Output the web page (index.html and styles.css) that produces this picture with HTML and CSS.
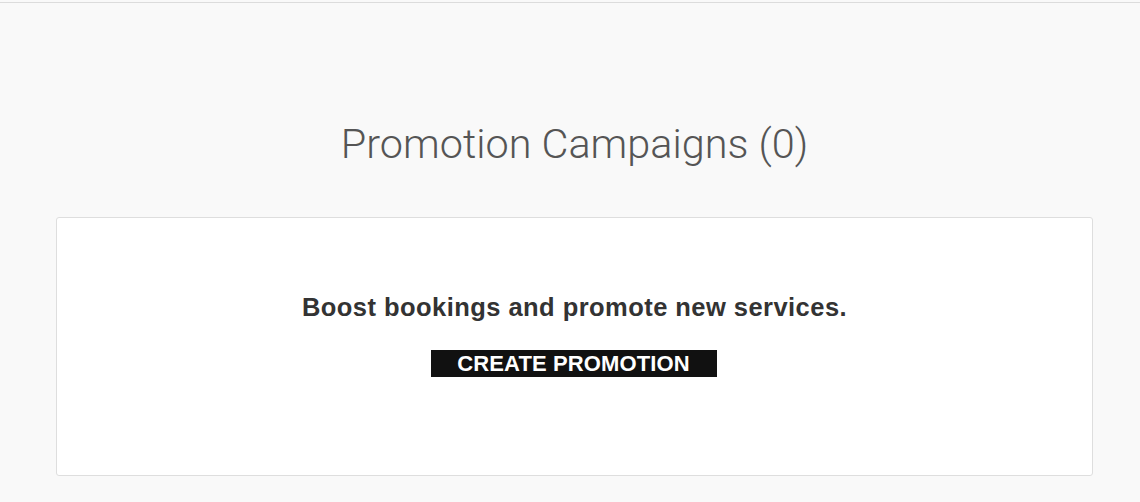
FILE: index.html
```html
<!DOCTYPE html>
<html>
<head>
<meta charset="utf-8">
<link rel="stylesheet" href="styles.css">
</head>
<body>
<div class="topline"></div>
<main class="page">
  <h1 class="title">Promotion Campaigns (0)</h1>
  <section class="card">
    <p class="lead">Boost bookings and promote new services.</p>
    <button class="btn">CREATE PROMOTION</button>
  </section>
</main>
</body>
</html>
```
FILE: styles.css
```css
html, body {
  margin: 0;
  padding: 0;
  background: #f9f9f9;
  font-family: Roboto, "Liberation Sans", sans-serif;
}
.topline {
  height: 2px;
  border-bottom: 1px solid #dcdcdc;
  background: #f9f9f9;
}
.page {
  padding: 0 47px 0 56px;
}
.title {
  margin: 0;
  padding-top: 118px;
  height: 96px;
  text-align: center;
  font-weight: 300;
  font-size: 41.4px;
  color: #555;
  line-height: 46px;
}
.card {
  box-sizing: border-box;
  height: 259px;
  background: #fff;
  border: 1px solid #dedede;
  border-radius: 3px;
  display: flex;
  flex-direction: column;
  align-items: center;
  padding-top: 73px;
}
.lead {
  margin: 0;
  font-family: "Liberation Sans", Arial, sans-serif;
  font-weight: 700;
  font-size: 25.5px;
  letter-spacing: 0.45px;
  line-height: 32px;
  color: #333;
}
.btn {
  margin: 27px 2px 0 0;
  width: 286px;
  height: 27px;
  background: #111;
  color: #fff;
  border: none;
  border-radius: 0;
  font-family: "Liberation Sans", Arial, sans-serif;
  font-weight: 700;
  font-size: 22px;
  letter-spacing: 0.12px;
  line-height: 27px;
  padding: 0;
}
```
